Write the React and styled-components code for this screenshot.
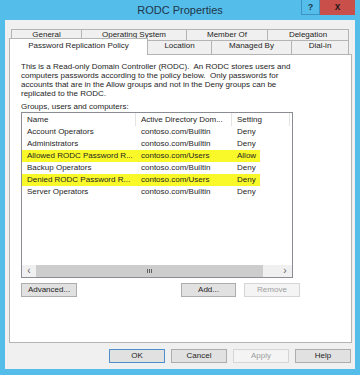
import React from "react";
import styled, { createGlobalStyle } from "styled-components";

const intro =
  "This is a Read-only Domain Controller (RODC).  An RODC stores users and\n" +
  "computers passwords according to the policy below.  Only passwords for\n" +
  "accounts that are in the Allow groups and not in the Deny groups can be\n" +
  "replicated to the RODC.";

const topTabs = [
  { label: "General", w: 71 },
  { label: "Operating System", w: 105 },
  { label: "Member Of", w: 81 },
  { label: "Delegation", w: 81 },
];

const bottomTabs = [
  { label: "Password Replication Policy", w: 139, active: true },
  { label: "Location", w: 64 },
  { label: "Managed By", w: 80 },
  { label: "Dial-in", w: 57 },
];

const columns = [
  { label: "Name", w: 114 },
  { label: "Active Directory Dom...", w: 96 },
  { label: "Setting", w: 58 },
];

const rows = [
  ["Account Operators", "contoso.com/Builtin", "Deny"],
  ["Administrators", "contoso.com/Builtin", "Deny"],
  ["Allowed RODC Password R...", "contoso.com/Users", "Allow", true],
  ["Backup Operators", "contoso.com/Builtin", "Deny"],
  ["Denied RODC Password R...", "contoso.com/Users", "Deny", true],
  ["Server Operators", "contoso.com/Builtin", "Deny"],
];

function App() {
  return (
    <>
      <GlobalStyle />
      <Window>
        <TitleBar>
          <span />
          <Title>RODC Properties</Title>
          <Controls>
            <HelpButton>?</HelpButton>
            <CloseButton>x</CloseButton>
          </Controls>
        </TitleBar>
        <Body>
          <TabRow $indent={2} $h={11}>
            {topTabs.map((t) => (
              <Tab key={t.label} $w={t.w}>{t.label}</Tab>
            ))}
          </TabRow>
          <TabRow $indent={0} $h={14}>
            {bottomTabs.map((t) => (
              <Tab key={t.label} $w={t.w} $active={t.active}>{t.label}</Tab>
            ))}
          </TabRow>
          <Panel>
            <Intro>{intro}</Intro>
            <Label>Groups, users and computers:</Label>
            <List>
              <HeaderRow>
                {columns.map((c) => (
                  <HeaderCell key={c.label} $w={c.w}>{c.label}</HeaderCell>
                ))}
              </HeaderRow>
              <Rows>
                {rows.map(([name, dom, setting, marked]) => (
                  <Row key={name} $marked={marked}>
                    <Cell $w={114}>{name}</Cell>
                    <Cell $w={96}>{dom}</Cell>
                    <Cell $w={58}>{setting}</Cell>
                  </Row>
                ))}
              </Rows>
              <ScrollBar>
                <Arrow>&lsaquo;</Arrow>
                <Thumb>
                  <Grip />
                </Thumb>
                <Track />
                <Arrow>&rsaquo;</Arrow>
              </ScrollBar>
            </List>
            <ActionRow>
              <Button $w={56}>Advanced...</Button>
              <Button $w={55} style={{ marginLeft: 96 }}>Add...</Button>
              <Button $w={56} $disabled>Remove</Button>
            </ActionRow>
          </Panel>
          <Footer>
            <Button $w={56} $default>OK</Button>
            <Button $w={56}>Cancel</Button>
            <Button $w={56} $disabled>Apply</Button>
            <Button $w={56}>Help</Button>
          </Footer>
        </Body>
      </Window>
    </>
  );
}

const GlobalStyle = createGlobalStyle`
  html, body {
    margin: 0;
    padding: 0;
  }
  body {
    background: #55bde9;
    font-family: "Liberation Sans", Arial, sans-serif;
  }
`;

const Window = styled.div`
  width: 360px;
  height: 375px;
  box-sizing: border-box;
  background: #55bde9;
  display: flex;
  flex-direction: column;
  padding: 0 5px 6px;
`;

const TitleBar = styled.div`
  height: 20px;
  margin: 0 -5px;
  padding: 0 5px;
  display: grid;
  grid-template-columns: 1fr auto 1fr;
  align-items: start;
`;

const Title = styled.div`
  margin-top: 4px;
  font-size: 11px;
  line-height: 13px;
  color: #1d3549;
`;

const Controls = styled.div`
  justify-self: end;
  display: flex;
  height: 15px;
`;

const HelpButton = styled.div`
  width: 19px;
  box-sizing: border-box;
  border: 1px solid #3d94c4;
  border-top: none;
  text-align: center;
  font-weight: bold;
  font-size: 9px;
  line-height: 14px;
  color: #1d3549;
`;

const CloseButton = styled.div`
  width: 35px;
  background: #c9504a;
  text-align: center;
  font-weight: bold;
  font-size: 10px;
  line-height: 14px;
  color: #2a1a1a;
`;

const Body = styled.div`
  flex: 1;
  background: #f0f0f0;
  padding: 9px 3px 6px 4px;
  display: flex;
  flex-direction: column;
`;

const TabRow = styled.div`
  display: flex;
  height: ${(p) => p.$h}px;
  margin-left: ${(p) => p.$indent}px;
`;

const Tab = styled.div`
  width: ${(p) => p.$w}px;
  box-sizing: border-box;
  border: 1px solid #b4b4b4;
  border-bottom: none;
  background: ${(p) => (p.$active ? "#ffffff" : "#f0f0f0")};
  font-size: 8px;
  line-height: ${(p) => (p.$active ? "14px" : "10px")};
  text-align: center;
  color: #1e1e1e;
  white-space: nowrap;
  & + & {
    border-left: none;
  }
  ${(p) =>
    p.$active &&
    `
    height: 17px;
    margin-top: -2px;
    position: relative;
    z-index: 1;
  `}
`;

const Panel = styled.div`
  height: 289px;
  box-sizing: border-box;
  background: #ffffff;
  border: 1px solid #b4b4b4;
  padding: 7px 11px 0;
  display: flex;
  flex-direction: column;
  color: #1e1e1e;
`;

const Intro = styled.p`
  margin: 0;
  font-size: 8px;
  line-height: 9px;
  white-space: pre;
`;

const Label = styled.div`
  margin-top: 4px;
  font-size: 8px;
  line-height: 9px;
`;

const List = styled.div`
  margin-top: 1px;
  width: 272px;
  height: 166px;
  box-sizing: border-box;
  border: 1px solid #8a8d94;
  display: flex;
  flex-direction: column;
`;

const HeaderRow = styled.div`
  display: flex;
  height: 13px;
`;

const HeaderCell = styled.div`
  width: ${(p) => p.$w}px;
  box-sizing: border-box;
  border-right: 1px solid #e3e3e3;
  padding-left: 5px;
  font-size: 8px;
  line-height: 13px;
  white-space: nowrap;
`;

const Rows = styled.div`
  flex: 1;
`;

const Row = styled.div`
  display: flex;
  height: 12px;
  background: ${(p) =>
    p.$marked
      ? "linear-gradient(to right, #f9f92a 0 238px, transparent 238px)"
      : "transparent"};
`;

const Cell = styled.div`
  width: ${(p) => p.$w}px;
  box-sizing: border-box;
  padding-left: 5px;
  font-size: 8px;
  line-height: 12px;
  white-space: nowrap;
`;

const ScrollBar = styled.div`
  display: flex;
  height: 12px;
  background: #f0f0f0;
`;

const Arrow = styled.div`
  width: 14px;
  text-align: center;
  font-size: 10px;
  line-height: 11px;
  color: #606060;
`;

const Thumb = styled.div`
  width: 227px;
  background: #cdcdcd;
  display: flex;
  align-items: center;
  justify-content: center;
`;

const Grip = styled.div`
  width: 5px;
  height: 4px;
  background: repeating-linear-gradient(to right, #606060 0 1px, transparent 1px 2px);
`;

const Track = styled.div`
  flex: 1;
`;

const ActionRow = styled.div`
  margin-top: 5px;
  display: flex;
  gap: 8px;
`;

const Button = styled.div`
  width: ${(p) => p.$w}px;
  height: 14px;
  box-sizing: border-box;
  border: 1px solid
    ${(p) => (p.$default ? "#4a8fc9" : p.$disabled ? "#d5d5d5" : "#adadad")};
  background: ${(p) => (p.$disabled ? "#f4f4f4" : "#e1e1e1")};
  color: ${(p) => (p.$disabled ? "#9d9d9d" : "#1e1e1e")};
  font-size: 8px;
  line-height: 12px;
  text-align: center;
`;

const Footer = styled.div`
  margin-top: 6px;
  padding-right: 1px;
  display: flex;
  justify-content: flex-end;
  gap: 6px;
`;

export default App;
